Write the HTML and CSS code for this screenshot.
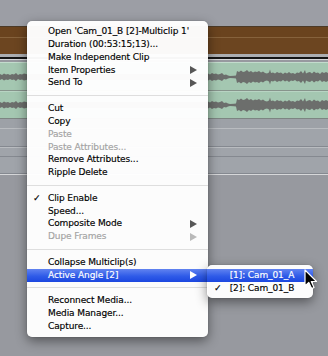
FILE: index.html
```html
<!DOCTYPE html>
<html>
<head>
<meta charset="utf-8">
<link rel="stylesheet" href="styles.css">
</head>
<body>
<div class="screen">
  <div class="timeline">
    <div class="band-top"></div>
    <div class="rule rule-dark"></div>
    <div class="brown brown-a"></div>
    <div class="rule rule-brown"></div>
    <div class="brown brown-b"></div>
    <div class="strip strip-a"></div>
    <div class="rule rule-black"></div>
    <div class="rule rule-white"></div>
    <div class="track track-1">
      <svg class="wave" width="328" height="28" viewBox="0 -15 328 28">
        <defs>
          <path id="half" d="M0,0 L0,-3 L2,-2 L4,-3.5 L6,-2.5 L8,-3 L10,-2 L12,-3 L14,-2.5 L16,-4 L18,-2 L20,-3 L22,-2.5 L24,-3.5 L26,-3 L28,-2.5 L30,-3 L100,-3 L200,-3 L208,-3.5 L210,-2.5 L212,-4 L214,-3 L216,-3.5 L218,-2.5 L220,-3 L222,-4 L224,-2 L226,-2.5 L228,-1.5 L230,-1 L234,-1.2 L236,-1.5 L237,-6 L239,-5 L241,-6.5 L243,-5 L245,-5.5 L247,-7 L249,-5 L251,-6 L253,-4.5 L255,-5.5 L257,-5 L259,-6 L261,-4.5 L263,-5.5 L265,-4 L267,-3.5 L269,-4.5 L270,-7.5 L271,-4 L273,-4.5 L275,-3.5 L277,-5 L279,-4 L281,-4.5 L283,-3 L285,-4.5 L287,-3.5 L289,-5 L291,-3.5 L293,-4 L295,-3 L297,-4.5 L299,-4 L301,-6 L303,-3.5 L305,-7 L306,-3.5 L308,-4.5 L310,-5 L312,-3.5 L314,-5.5 L316,-4 L318,-4.5 L320,-3 L322,-5 L324,-4 L326,-5 L328,-4 L328,0 Z"/>
        </defs>
        <use href="#half" fill="#6c6e6c"/>
        <use href="#half" fill="#6c6e6c" transform="scale(1,-1)"/>
      </svg>
    </div>
    <div class="rule rule-track"></div>
    <div class="track track-2">
      <svg class="wave" width="328" height="27" viewBox="0 -14 328 27">
        <use href="#half" fill="#6c6e6c"/>
        <use href="#half" fill="#6c6e6c" transform="scale(1,-1)"/>
      </svg>
    </div>
    <div class="rule rule-trackend"></div>
    <div class="gray gray-a"></div>
    <div class="rule rule-light"></div>
    <div class="gray gray-b"></div>
    <div class="rule rule-mid"></div>
    <div class="rule rule-light"></div>
    <div class="gray gray-c"></div>
    <div class="rule rule-mid"></div>
    <div class="gray gray-d"></div>
    <div class="rule rule-mid"></div>
    <div class="rule rule-white"></div>
    <div class="floor"></div>
  </div>

  <div class="menu">
    <div class="item"><span class="check"></span><span class="label">Open 'Cam_01_B [2]-Multiclip 1'</span></div>
    <div class="item"><span class="check"></span><span class="label">Duration (00:53:15;13)...</span></div>
    <div class="item"><span class="check"></span><span class="label">Make Independent Clip</span></div>
    <div class="item"><span class="check"></span><span class="label">Item Properties</span><span class="arrow"></span></div>
    <div class="item"><span class="check"></span><span class="label">Send To</span><span class="arrow"></span></div>
    <div class="sep"></div>
    <div class="item"><span class="check"></span><span class="label">Cut</span></div>
    <div class="item"><span class="check"></span><span class="label">Copy</span></div>
    <div class="item disabled"><span class="check"></span><span class="label">Paste</span></div>
    <div class="item disabled"><span class="check"></span><span class="label">Paste Attributes...</span></div>
    <div class="item"><span class="check"></span><span class="label">Remove Attributes...</span></div>
    <div class="item"><span class="check"></span><span class="label">Ripple Delete</span></div>
    <div class="sep"></div>
    <div class="item"><span class="check">✓</span><span class="label">Clip Enable</span></div>
    <div class="item"><span class="check"></span><span class="label">Speed...</span></div>
    <div class="item"><span class="check"></span><span class="label">Composite Mode</span><span class="arrow"></span></div>
    <div class="item disabled"><span class="check"></span><span class="label">Dupe Frames</span><span class="arrow"></span></div>
    <div class="sep"></div>
    <div class="item"><span class="check"></span><span class="label">Collapse Multiclip(s)</span></div>
    <div class="item active"><span class="check"></span><span class="label">Active Angle [2]</span><span class="arrow"></span></div>
    <div class="sep"></div>
    <div class="item"><span class="check"></span><span class="label">Reconnect Media...</span></div>
    <div class="item"><span class="check"></span><span class="label">Media Manager...</span></div>
    <div class="item"><span class="check"></span><span class="label">Capture...</span></div>

    <div class="submenu">
      <div class="subitem active"><span class="check"></span><span class="label">[1]: Cam_01_A</span></div>
      <div class="subitem"><span class="check">✓</span><span class="label">[2]: Cam_01_B</span></div>
    </div>
  </div>

  <svg class="cursor" width="14" height="22" viewBox="0 0 14 22">
    <path d="M1,1 L1,17 L4.8,13.4 L7.6,19.6 L10,18.5 L7.3,12.5 L12.5,12.5 Z" fill="#000" stroke="#fff" stroke-width="1.2" stroke-linejoin="round"/>
  </svg>
</div>
</body>
</html>
```

FILE: styles.css
```css
html, body {
  margin: 0;
  padding: 0;
}
body {
  width: 328px;
  height: 356px;
  overflow: hidden;
  background: #97999f;
  font-family: "Lucida Grande", "DejaVu Sans", sans-serif;
}
.screen {
  position: relative;
  width: 328px;
  height: 356px;
  overflow: hidden;
}
.timeline {
  display: flex;
  flex-direction: column;
  width: 328px;
  height: 356px;
}
.timeline > div { flex: none; }
.rule { height: 1px; }
.band-top { height: 26px; background: #9c9ea5; }
.rule-dark { background: #4b3a28; }
.brown { background: #6c4520; }
.brown-a { height: 10px; background: #6a431e; }
.rule-brown { background: #86623c; }
.brown-b { height: 16px; }
.strip { background: #acaeb1; }
.strip-a { height: 3px; }
.rule-black { background: #151515; height: 2px; }
.rule-white { background: #d6d7d9; }
.track {
  background: #a4c7b1;
  position: relative;
}
.track-1 {
  height: 28px;
  margin-top: 2px;
  box-shadow: inset 0 1px 0 #c3dccd;
}
.track-2 {
  height: 27px;
  box-shadow: inset 0 1px 0 #b8d4c3;
}
.wave { display: block; }
.rule-track { background: #87948c; }
.rule-trackend { background: #7d8582; }
.gray { background: #a0a4aa; }
.gray-a { height: 9px; background: #9da1a7; }
.rule-light { background: #b9bcc0; }
.gray-b { height: 17px; }
.rule-mid { background: #858990; }
.gray-c { height: 8px; }
.gray-d { height: 16px; }
.floor { flex: 1 1 auto !important; background: #97999f; }

/* Context menu */
.menu {
  position: absolute;
  left: 27px;
  top: 21px;
  width: 181px;
  padding: 4.3px 0 4px;
  background: rgba(255, 255, 255, 0.97);
  border-radius: 5px;
  box-shadow: 0 4px 12px rgba(0, 0, 0, 0.45), 0 0 1px rgba(0, 0, 0, 0.35);
  font-size: 9px;
  letter-spacing: -0.1px;
  color: #000;
  -webkit-text-stroke: 0.15px currentColor;
}
.item {
  display: flex;
  align-items: center;
  height: 12.8px;
  line-height: 12.8px;
  padding-right: 11px;
  white-space: nowrap;
}
.check {
  flex: none;
  width: 15px;
  margin-left: 6px;
  font-size: 9px;
}
.label { flex: 1 1 auto; }
.arrow {
  flex: none;
  width: 0;
  height: 0;
  border-left: 7px solid #575757;
  border-top: 4px solid transparent;
  border-bottom: 4px solid transparent;
}
.disabled { color: #a3a3a3; }
.disabled .arrow { border-left-color: #b9b9b9; }
.active {
  color: #fff;
  background: linear-gradient(#6183f0, #2f5be8 55%, #1c47e0);
}
.active .arrow { border-left-color: #fff; }
.sep {
  height: 12.9px;
  display: flex;
  align-items: center;
}
.sep::before {
  content: "";
  flex: 1;
  height: 1px;
  background: #dedede;
}

/* Submenu */
.submenu {
  position: absolute;
  left: 180px;
  top: 244px;
  width: 106px;
  padding: 4px 0 3px;
  background: rgba(255, 255, 255, 0.97);
  border-radius: 5px;
  box-shadow: 0 4px 12px rgba(0, 0, 0, 0.45), 0 0 1px rgba(0, 0, 0, 0.35);
}
.subitem {
  display: flex;
  align-items: center;
  height: 12.8px;
  line-height: 12.8px;
  white-space: nowrap;
}
.subitem .check {
  width: 15.7px;
  margin-left: 7px;
}

.cursor {
  position: absolute;
  left: 304px;
  top: 269px;
}
```
